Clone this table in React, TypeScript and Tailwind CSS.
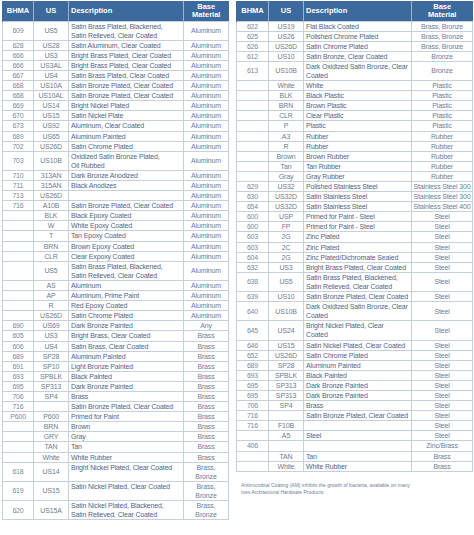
import React from 'react'

type Row = [string, string, string, string]

const leftRows: Row[] = [
  ['609', 'US5', 'Satin Brass Plated, Blackened,\nSatin Relieved, Clear Coated', 'Aluminum'],
  ['628', 'US28', 'Satin Aluminum, Clear Coated', 'Aluminum'],
  ['666', 'US3', 'Bright Brass Plated, Clear Coated', 'Aluminum'],
  ['666', 'US3AL', 'Bright Brass Plated, Clear Coated', 'Aluminum'],
  ['667', 'US4', 'Satin Brass Plated, Clear Coated', 'Aluminum'],
  ['668', 'US10A', 'Satin Bronze Plated, Clear Coated', 'Aluminum'],
  ['668', 'US10AL', 'Satin Bronze Plated, Clear Coated', 'Aluminum'],
  ['669', 'US14', 'Bright Nickel Plated', 'Aluminum'],
  ['670', 'US15', 'Satin Nickel Plate', 'Aluminum'],
  ['673', 'US92', 'Aluminum, Clear Coated', 'Aluminum'],
  ['689', 'US65', 'Aluminum Painted', 'Aluminum'],
  ['702', 'US26D', 'Satin Chrome Plated', 'Aluminum'],
  ['703', 'US10B', 'Oxidized Satin Bronze Plated,\nOil Rubbed', 'Aluminum'],
  ['710', '313AN', 'Dark Bronze Anodized', 'Aluminum'],
  ['711', '315AN', 'Black Anodizes', 'Aluminum'],
  ['713', 'US26D', '', 'Aluminum'],
  ['716', 'A10B', 'Satin Bronze Plated, Clear Coated', 'Aluminum'],
  ['', 'BLK', 'Black Epoxy Coated', 'Aluminum'],
  ['', 'W', 'White Epoxy Coated', 'Aluminum'],
  ['', 'T', 'Tan Epoxy Coated', 'Aluminum'],
  ['', 'BRN', 'Brown Epoxy Coated', 'Aluminum'],
  ['', 'CLR', 'Clear Expoxy Coated', 'Aluminum'],
  ['', 'US5', 'Satin Brass Plated, Blackened,\nSatin Relieved, Clear Coated', 'Aluminum'],
  ['', 'AS', 'Aluminum', 'Aluminum'],
  ['', 'AP', 'Aluminum, Prime Paint', 'Aluminum'],
  ['', 'R', 'Red Epoxy Coated', 'Aluminum'],
  ['', 'US26D', 'Satin Chrome Plated', 'Aluminum'],
  ['690', 'US69', 'Dark Bronze Painted', 'Any'],
  ['605', 'US3', 'Bright Brass, Clear Coated', 'Brass'],
  ['606', 'US4', 'Satin Brass, Clear Coated', 'Brass'],
  ['689', 'SP28', 'Aluminum Painted', 'Brass'],
  ['691', 'SP10', 'Light Bronze Painted', 'Brass'],
  ['693', 'SPBLK', 'Black Painted', 'Brass'],
  ['695', 'SP313', 'Dark Bronze Painted', 'Brass'],
  ['706', 'SP4', 'Brass', 'Brass'],
  ['716', '', 'Satin Bronze Plated, Clear Coated', 'Brass'],
  ['P600', 'P600', 'Primed for Paint', 'Brass'],
  ['', 'BRN', 'Brown', 'Brass'],
  ['', 'GRY', 'Gray', 'Brass'],
  ['', 'TAN', 'Tan', 'Brass'],
  ['', 'White', 'White Rubber', 'Brass'],
  ['618', 'US14', 'Bright Nickel Plated, Clear Coated', 'Brass,\nBronze'],
  ['619', 'US15', 'Satin Nickel Plated, Clear Coated', 'Brass,\nBronze'],
  ['620', 'US15A', 'Satin Nickel Plated, Blackened,\nSatin Relieved, Clear Coated', 'Brass,\nBronze'],
]

const rightRows: Row[] = [
  ['622', 'US19', 'Flat Black Coated', 'Brass, Bronze'],
  ['625', 'US26', 'Polished Chrome Plated', 'Brass, Bronze'],
  ['626', 'US26D', 'Satin Chrome Plated', 'Brass, Bronze'],
  ['612', 'US10', 'Satin Bronze, Clear Coated', 'Bronze'],
  ['613', 'US10B', 'Dark Oxidized Satin Bronze, Clear\nCoated', 'Bronze'],
  ['', 'White', 'White', 'Plastic'],
  ['', 'BLK', 'Black Plastic', 'Plastic'],
  ['', 'BRN', 'Brown Plastic', 'Plastic'],
  ['', 'CLR', 'Clear Plastic', 'Plastic'],
  ['', 'P', 'Plastic', 'Plastic'],
  ['', 'A3', 'Rubber', 'Rubber'],
  ['', 'R', 'Rubber', 'Rubber'],
  ['', 'Brown', 'Brown Rubber', 'Rubber'],
  ['', 'Tan', 'Tan Rubber', 'Rubber'],
  ['', 'Gray', 'Gray Rubber', 'Rubber'],
  ['629', 'US32', 'Polished Stainless Steel', 'Stainless Steel 300'],
  ['630', 'US32D', 'Satin Stainless Steel', 'Stainless Steel 300'],
  ['654', 'US32D', 'Satin Stainless Steel', 'Stainless Steel 400'],
  ['600', 'USP', 'Primed for Paint - Steel', 'Steel'],
  ['600', 'FP', 'Primed for Paint - Steel', 'Steel'],
  ['603', '2G', 'Zinc Plated', 'Steel'],
  ['603', '2C', 'Zinc Plated', 'Steel'],
  ['604', '2G', 'Zinc Plated/Dichromate Sealed', 'Steel'],
  ['632', 'US3', 'Bright Brass Plated, Clear Coated', 'Steel'],
  ['638', 'US5', 'Satin Brass Plated, Blackened,\nSatin Relieved, Clear Coated', 'Steel'],
  ['639', 'US10', 'Satin Bronze Plated, Clear Coated', 'Steel'],
  ['640', 'US10B', 'Dark Oxidized Satin Bronze, Clear\nCoated', 'Steel'],
  ['645', 'US24', 'Bright Nickel Plated, Clear\nCoated', 'Steel'],
  ['646', 'US15', 'Satin Nickel Plated, Clear Coated', 'Steel'],
  ['652', 'US26D', 'Satin Chrome Plated', 'Steel'],
  ['689', 'SP28', 'Aluminum Painted', 'Steel'],
  ['693', 'SPBLK', 'Black Painted', 'Steel'],
  ['695', 'SP313', 'Dark Bronze Painted', 'Steel'],
  ['695', 'SP313', 'Dark Bronze Painted', 'Steel'],
  ['706', 'SP4', 'Brass', 'Steel'],
  ['716', '', 'Satin Bronze Plated, Clear Coated', 'Steel'],
  ['716', 'F10B', '', 'Steel'],
  ['', 'A5', 'Steel', 'Steel'],
  ['406', '', '', 'Zinc/Brass'],
  ['', 'TAN', 'Tan', 'Brass'],
  ['', 'White', 'White Rubber', 'Brass'],
]

const FinishTable = ({ rows, widths }: { rows: Row[]; widths: string[] }) => {
  return (
    <table className="table-fixed border-collapse w-full">
      <colgroup>
        <col className={widths[0]} />
        <col className={widths[1]} />
        <col className={widths[2]} />
        <col className={widths[3]} />
      </colgroup>
      <thead>
        <tr className="bg-[#3d6a9c] text-white font-bold text-[7.5px] leading-[8px] h-[20px]">
          <th className="text-center border-r border-[#9db4cf] border-l border-l-[#3d6a9c]">BHMA</th>
          <th className="text-center border-r border-[#9db4cf]">US</th>
          <th className="text-left pl-[2px] border-r border-[#9db4cf]">Description</th>
          <th className="text-center">
            Base
            <br />
            Material
          </th>
        </tr>
      </thead>
      <tbody className="text-[7px] leading-[9.1px] tracking-[-0.15px]">
        {rows.map((row, i) => (
          <tr key={i}>
            <td className="border border-[#c6d0dc] text-center align-middle text-[#7b8898] whitespace-nowrap">
              {row[0]}
            </td>
            <td className="border border-[#c6d0dc] text-center align-middle text-[#6d7c90] whitespace-nowrap">
              {row[1]}
            </td>
            <td className="border border-[#c6d0dc] pl-[2px] align-top text-[#4f6686] whitespace-pre overflow-hidden">
              {row[2]}
            </td>
            <td className="border border-[#c6d0dc] text-center align-middle text-[#6b7e96] whitespace-pre">
              {row[3]}
            </td>
          </tr>
        ))}
      </tbody>
    </table>
  )
}

export default function App() {
  return (
    <div
      className="w-[474px] h-[535px] bg-white flex items-start gap-[8px] pl-[2px] pt-[1px]"
      style={{ fontFamily: '"Liberation Sans", Arial, sans-serif' }}
    >
      <div className="w-[226px]">
        <FinishTable rows={leftRows} widths={['w-[31px]', 'w-[35px]', 'w-[115px]', 'w-[45px]']} />
      </div>
      <div className="w-[236px] flex flex-col">
        <FinishTable rows={rightRows} widths={['w-[32px]', 'w-[35px]', 'w-[108px]', 'w-[61px]']} />
        <p className="mt-[10px] pl-[5px] text-[5px] leading-[7px] text-[#6f7f94]">
          Antimicrobial Coating (AM) inhibits the growth of bacteria, available on many
          <br />
          tves Architectural Hardware Products.
        </p>
      </div>
    </div>
  )
}
